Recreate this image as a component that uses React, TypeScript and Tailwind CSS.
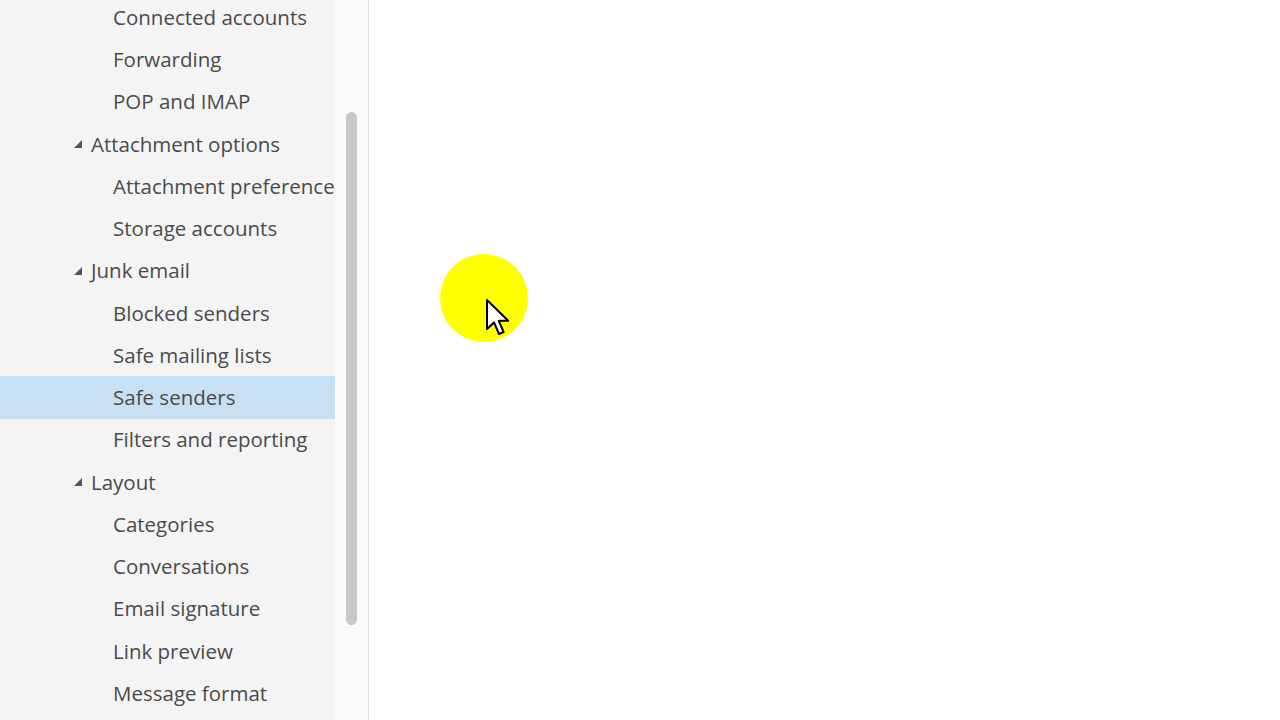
import React from 'react';

type Item = { label: string; level: 0 | 1; selected?: boolean };

const items: Item[] = [
  { label: 'Connected accounts', level: 1 },
  { label: 'Forwarding', level: 1 },
  { label: 'POP and IMAP', level: 1 },
  { label: 'Attachment options', level: 0 },
  { label: 'Attachment preferences', level: 1 },
  { label: 'Storage accounts', level: 1 },
  { label: 'Junk email', level: 0 },
  { label: 'Blocked senders', level: 1 },
  { label: 'Safe mailing lists', level: 1 },
  { label: 'Safe senders', level: 1, selected: true },
  { label: 'Filters and reporting', level: 1 },
  { label: 'Layout', level: 0 },
  { label: 'Categories', level: 1 },
  { label: 'Conversations', level: 1 },
  { label: 'Email signature', level: 1 },
  { label: 'Link preview', level: 1 },
  { label: 'Message format', level: 1 },
];

const Caret = () => (
  <svg width="8" height="8" viewBox="0 0 8 8" className="mr-[9px] shrink-0">
    <path d="M8 0 L8 8 L0 8 Z" fill="#555" />
  </svg>
);

const Cursor = () => (
  <svg width="26" height="38" viewBox="0 0 13 19" className="absolute left-[485px] top-[298px]">
    <path
      d="M1 1 L1 15.5 L4.5 12.2 L7 18 L9.3 17 L6.9 11.4 L11.6 11.4 Z"
      fill="#fff"
      stroke="#000"
      strokeWidth="1"
      strokeLinejoin="round"
    />
  </svg>
);

export default function App() {
  return (
    <div className="relative flex h-[720px] w-[1280px] overflow-hidden bg-white font-['Open_Sans',sans-serif]">
      <div className="flex h-full w-[369px] shrink-0 border-r border-[#dcdcdc]">
        <div className="h-full w-[335px] overflow-hidden bg-[#f4f4f4]">
          <ul className="mt-[-4px]">
            {items.map((it) => (
              <li
                key={it.label}
                className={`flex h-[42.25px] items-center overflow-hidden whitespace-nowrap text-[20.5px] text-[#4a4a4a] ${
                  it.level === 0 ? 'pl-[74px]' : 'pl-[113px]'
                } ${it.selected ? 'bg-[#c7e0f4]' : ''}`}
              >
                {it.level === 0 && <Caret />}
                <span>{it.label}</span>
              </li>
            ))}
          </ul>
        </div>
        <div className="h-full flex-1 bg-[#fafafa] pl-[11px] pt-[112px]">
          <div className="h-[513px] w-[11px] rounded-full bg-[#c8c8c8]" />
        </div>
      </div>
      <div className="flex-1" />
      <div className="absolute left-[440px] top-[254px] h-[88px] w-[88px] rounded-full bg-[#ffff00]" />
      <Cursor />
    </div>
  );
}
